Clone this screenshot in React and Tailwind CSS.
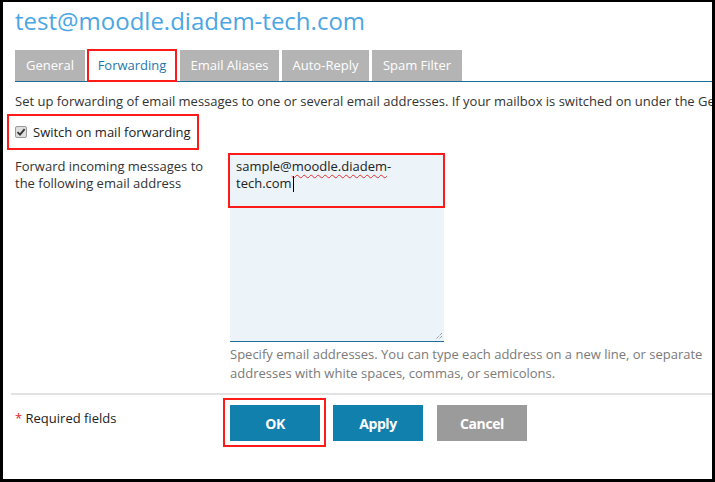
import React from "react";

const font = { fontFamily: '"Open Sans", "Noto Sans", sans-serif' };

function Tab({ children, active, w }) {
  if (active) {
    return (
      <div className={`${w} h-[31px] flex items-center justify-center bg-white text-[#1f78ad] text-[13px] outline-2 outline-[#ff1a1a] outline-offset-[-1px] relative z-10`}>
        {children}
      </div>
    );
  }
  return (
    <div className={`${w} h-[31px] flex items-center justify-center bg-[#b4b4b4] text-white text-[13px]`}>
      {children}
    </div>
  );
}

export default function App() {
  return (
    <div
      className="w-[715px] h-[482px] bg-white border-t-2 border-l-[3px] border-r-[3px] border-b-[3px] border-black overflow-hidden"
      style={font}
    >
      <div className="pl-[12px] pt-[3px] flex flex-col">
        <div className="text-[24px] leading-[32px] text-[#4ba6e4] whitespace-nowrap">
          test@moodle.diadem-tech.com
        </div>

        <div className="mt-[13px] flex border-b border-[#1c6f9a] whitespace-nowrap">
          <Tab w="w-[70px]">General</Tab>
          <div className="w-[3px]" />
          <Tab active w="w-[88px]">Forwarding</Tab>
          <div className="w-[4px]" />
          <Tab w="w-[99px]">Email Aliases</Tab>
          <div className="w-[3px]" />
          <Tab w="w-[87px]">Auto-Reply</Tab>
          <div className="w-[3px]" />
          <Tab w="w-[90px]">Spam Filter</Tab>
        </div>

        <div className="mt-[10px] text-[13px] leading-[18px] text-[#333] whitespace-nowrap">
          Set up forwarding of email messages to one or several email addresses. If your mailbox is switched on under the General tab, all messages will be kept.
        </div>

        <div className="mt-[4px] -ml-[8px] self-start flex items-center border-2 border-[#ff1a1a] pl-[6px] pr-[7px] py-[7px]">
          <div className="w-[12px] h-[12px] rounded-[2px] border border-[#9a9a9a] bg-[#dedede] flex items-center justify-center">
            <svg width="10" height="10" viewBox="0 0 10 10">
              <path d="M1.5 5.2 L4 7.6 L8.6 2.2" fill="none" stroke="#333" strokeWidth="1.8" />
            </svg>
          </div>
          <span className="ml-[6px] text-[13px] leading-[18px] text-[#222]">Switch on mail forwarding</span>
        </div>

        <div className="mt-[4px] flex">
          <div className="w-[215px] pt-[4px] text-[13px] leading-[17px] text-[#333]">
            Forward incoming messages to
            <br />
            the following email address
          </div>
          <div className="flex flex-col">
            <div className="relative w-[214px] h-[188px] bg-[#ecf3f9] border-b border-[#1c6f9a] pl-[6px] pt-[4px] text-[13px] leading-[17px] text-[#222]">
              <div>
                sample@
                <span className="underline decoration-wavy decoration-[#e03030] decoration-1 underline-offset-[3px]">moodle.diadem</span>-
              </div>
              <div className="flex items-center">
                tech.com<span className="inline-block w-[1px] h-[16px] bg-black ml-[1px]" />
              </div>
              <svg className="absolute right-[1px] bottom-[1px]" width="9" height="9" viewBox="0 0 9 9">
                <path d="M8 2 L2 8 M8 5 L5 8" stroke="#777" strokeWidth="1" strokeDasharray="1 1" fill="none" />
              </svg>
              <div className="absolute -left-[2px] -top-[1px] w-[217px] h-[55px] border-2 border-[#ff1a1a]" />
            </div>
            <div className="mt-[3px] w-[480px] text-[13px] leading-[19px] text-[#7a7a7a]">
              Specify email addresses. You can type each address on a new line, or separate
              <br />
              addresses with white spaces, commas, or semicolons.
            </div>
          </div>
        </div>

        <div className="mt-[10px] -ml-[4px] h-[2px] bg-[#e2e2e2]" />

        <div className="mt-[10px] flex">
          <div className="w-[215px] pt-[4px] text-[13px] leading-[18px] text-[#222]">
            <span className="text-[#e0261f]">*</span> Required fields
          </div>
          <div className="flex">
            <div className="relative">
              <button className="w-[90px] h-[36px] bg-[#1280ad] text-white text-[14px] font-bold tracking-[-0.4px]">OK</button>
              <div className="absolute -left-[7px] -top-[7px] -right-[6px] -bottom-[6px] border-2 border-[#ff1a1a]" />
            </div>
            <button className="ml-[13px] w-[90px] h-[36px] bg-[#1280ad] text-white text-[14px] font-bold tracking-[-0.4px]">Apply</button>
            <button className="ml-[14px] w-[90px] h-[36px] bg-[#9b9b9b] text-white text-[14px] font-bold tracking-[-0.4px]">Cancel</button>
          </div>
        </div>
      </div>
    </div>
  );
}
